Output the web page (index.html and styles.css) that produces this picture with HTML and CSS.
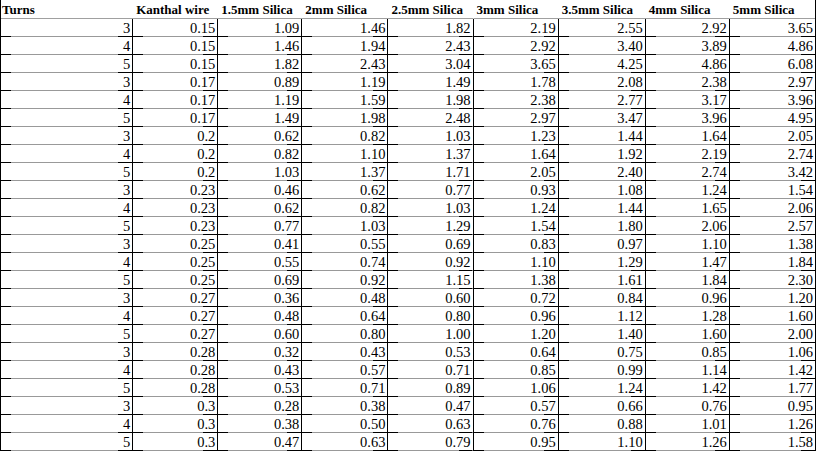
FILE: index.html
```html
<!DOCTYPE html>
<html>
<head>
<meta charset="utf-8">
<link rel="stylesheet" href="styles.css">
</head>
<body>
<table class="sheet">
<colgroup>
<col class="c-turns"><col class="c85"><col class="c84"><col class="c86"><col class="c85"><col class="c85"><col class="c87"><col class="c84"><col class="c86">
</colgroup>
<thead>
<tr><th>Turns</th><th>Kanthal wire</th><th>1.5mm Silica</th><th>2mm Silica</th><th>2.5mm Silica</th><th>3mm Silica</th><th>3.5mm Silica</th><th>4mm Silica</th><th class="last">5mm Silica</th></tr>
</thead>
<tbody>
<tr><td>3</td><td>0.15</td><td>1.09</td><td>1.46</td><td>1.82</td><td>2.19</td><td>2.55</td><td>2.92</td><td>3.65</td></tr>
<tr><td>4</td><td>0.15</td><td>1.46</td><td>1.94</td><td>2.43</td><td>2.92</td><td>3.40</td><td>3.89</td><td>4.86</td></tr>
<tr><td>5</td><td>0.15</td><td>1.82</td><td>2.43</td><td>3.04</td><td>3.65</td><td>4.25</td><td>4.86</td><td>6.08</td></tr>
<tr><td>3</td><td>0.17</td><td>0.89</td><td>1.19</td><td>1.49</td><td>1.78</td><td>2.08</td><td>2.38</td><td>2.97</td></tr>
<tr><td>4</td><td>0.17</td><td>1.19</td><td>1.59</td><td>1.98</td><td>2.38</td><td>2.77</td><td>3.17</td><td>3.96</td></tr>
<tr><td>5</td><td>0.17</td><td>1.49</td><td>1.98</td><td>2.48</td><td>2.97</td><td>3.47</td><td>3.96</td><td>4.95</td></tr>
<tr><td>3</td><td>0.2</td><td>0.62</td><td>0.82</td><td>1.03</td><td>1.23</td><td>1.44</td><td>1.64</td><td>2.05</td></tr>
<tr><td>4</td><td>0.2</td><td>0.82</td><td>1.10</td><td>1.37</td><td>1.64</td><td>1.92</td><td>2.19</td><td>2.74</td></tr>
<tr><td>5</td><td>0.2</td><td>1.03</td><td>1.37</td><td>1.71</td><td>2.05</td><td>2.40</td><td>2.74</td><td>3.42</td></tr>
<tr><td>3</td><td>0.23</td><td>0.46</td><td>0.62</td><td>0.77</td><td>0.93</td><td>1.08</td><td>1.24</td><td>1.54</td></tr>
<tr><td>4</td><td>0.23</td><td>0.62</td><td>0.82</td><td>1.03</td><td>1.24</td><td>1.44</td><td>1.65</td><td>2.06</td></tr>
<tr><td>5</td><td>0.23</td><td>0.77</td><td>1.03</td><td>1.29</td><td>1.54</td><td>1.80</td><td>2.06</td><td>2.57</td></tr>
<tr><td>3</td><td>0.25</td><td>0.41</td><td>0.55</td><td>0.69</td><td>0.83</td><td>0.97</td><td>1.10</td><td>1.38</td></tr>
<tr><td>4</td><td>0.25</td><td>0.55</td><td>0.74</td><td>0.92</td><td>1.10</td><td>1.29</td><td>1.47</td><td>1.84</td></tr>
<tr><td>5</td><td>0.25</td><td>0.69</td><td>0.92</td><td>1.15</td><td>1.38</td><td>1.61</td><td>1.84</td><td>2.30</td></tr>
<tr><td>3</td><td>0.27</td><td>0.36</td><td>0.48</td><td>0.60</td><td>0.72</td><td>0.84</td><td>0.96</td><td>1.20</td></tr>
<tr><td>4</td><td>0.27</td><td>0.48</td><td>0.64</td><td>0.80</td><td>0.96</td><td>1.12</td><td>1.28</td><td>1.60</td></tr>
<tr><td>5</td><td>0.27</td><td>0.60</td><td>0.80</td><td>1.00</td><td>1.20</td><td>1.40</td><td>1.60</td><td>2.00</td></tr>
<tr><td>3</td><td>0.28</td><td>0.32</td><td>0.43</td><td>0.53</td><td>0.64</td><td>0.75</td><td>0.85</td><td>1.06</td></tr>
<tr><td>4</td><td>0.28</td><td>0.43</td><td>0.57</td><td>0.71</td><td>0.85</td><td>0.99</td><td>1.14</td><td>1.42</td></tr>
<tr><td>5</td><td>0.28</td><td>0.53</td><td>0.71</td><td>0.89</td><td>1.06</td><td>1.24</td><td>1.42</td><td>1.77</td></tr>
<tr><td>3</td><td>0.3</td><td>0.28</td><td>0.38</td><td>0.47</td><td>0.57</td><td>0.66</td><td>0.76</td><td>0.95</td></tr>
<tr><td>4</td><td>0.3</td><td>0.38</td><td>0.50</td><td>0.63</td><td>0.76</td><td>0.88</td><td>1.01</td><td>1.26</td></tr>
<tr><td>5</td><td>0.3</td><td>0.47</td><td>0.63</td><td>0.79</td><td>0.95</td><td>1.10</td><td>1.26</td><td>1.58</td></tr>
</tbody>
</table>
</body>
</html>
```

FILE: styles.css
```css
html, body {
  margin: 0;
  padding: 0;
  background: #fff;
}

.sheet {
  table-layout: fixed;
  width: 816px;
  border-collapse: separate;
  border-spacing: 0;
  border-left: 1px solid #000;
  font-family: "Liberation Serif", "Times New Roman", serif;
  color: #000;
}

.c-turns { width: 132px; }
.c84 { width: 84px; }
.c85 { width: 85px; }
.c86 { width: 86px; }
.c87 { width: 87px; }

.sheet th {
  box-sizing: border-box;
  height: 19px;
  padding: 0 0 2px 3px;
  font-size: 13px;
  font-weight: bold;
  text-align: left;
  vertical-align: bottom;
  white-space: nowrap;
  line-height: 15px;
  background: linear-gradient(#a0a0a0, #a0a0a0) no-repeat bottom / 100% 1px;
}

.sheet th:first-child {
  padding-left: 1px;
}

.sheet th.last {
  border-right: 1px solid #000;
}

.sheet td {
  box-sizing: border-box;
  height: 18px;
  padding: 0 2px 1px 0;
  font-size: 14.5px;
  line-height: 16px;
  text-align: right;
  vertical-align: bottom;
  border-right: 1px solid #000;
  background:
    linear-gradient(to right, #000 0 10px, #999 10px calc(100% - 14px), #000 calc(100% - 14px)) no-repeat bottom / 100% 1px;
}
```
